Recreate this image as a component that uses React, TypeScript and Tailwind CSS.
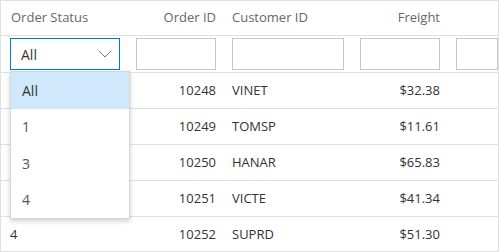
import React from 'react';
import { ChevronDown } from 'lucide-react';

type Order = { status: string; id: number; customer: string; freight: string };

const orders: Order[] = [
  { status: '1', id: 10248, customer: 'VINET', freight: '$32.38' },
  { status: '1', id: 10249, customer: 'TOMSP', freight: '$11.61' },
  { status: '3', id: 10250, customer: 'HANAR', freight: '$65.83' },
  { status: '4', id: 10251, customer: 'VICTE', freight: '$41.34' },
  { status: '4', id: 10252, customer: 'SUPRD', freight: '$51.30' },
];

const cols = 'grid grid-cols-[125px_96px_128px_96px_1fr]';

export default function App() {
  return (
    <div className="relative w-[499px] h-[252px] overflow-hidden bg-white border border-[#e0e0e0] text-[13px] font-['Open_Sans',sans-serif]">
      {/* header */}
      <div className={`${cols} h-[35px] border-b border-[#e0e0e0] text-[#666] items-center`}>
        <div className="pl-[10px]">Order Status</div>
        <div className="pr-[6px] text-right">Order ID</div>
        <div className="pl-[10px]">Customer ID</div>
        <div className="pr-[6px] text-right">Freight</div>
        <div />
      </div>

      {/* filter row */}
      <div className={`${cols} h-[37px] border-b border-[#e0e0e0] items-center`}>
        <div className="pl-[9px] pr-[6px]">
          <div className="h-[32px] border border-[#0078d6] flex items-center justify-between pl-[10px] pr-[2px] text-[14px] text-[#333]">
            <span>All</span>
            <ChevronDown size={24} strokeWidth={1} className="text-[#777]" />
          </div>
        </div>
        <div className="pl-[10px] pr-[6px]"><div className="h-[32px] border border-[#c8c8c8]" /></div>
        <div className="pl-[10px] pr-[6px]"><div className="h-[32px] border border-[#c8c8c8]" /></div>
        <div className="pl-[10px] pr-[6px]"><div className="h-[32px] border border-[#c8c8c8]" /></div>
        <div className="pl-[10px]"><div className="h-[32px] border border-[#c8c8c8]" /></div>
      </div>

      {/* rows */}
      {orders.map((o) => (
        <div key={o.id} className={`${cols} h-[36px] border-b border-[#e0e0e0] items-center text-[#333]`}>
          <div className="pl-[9px]">{o.status}</div>
          <div className="pr-[6px] text-right">{o.id}</div>
          <div className="pl-[10px]">{o.customer}</div>
          <div className="pr-[6px] text-right">{o.freight}</div>
          <div />
        </div>
      ))}

      {/* status dropdown popup */}
      <div className="absolute left-[9px] top-[70px] w-[120px] bg-white border border-[#d6d6d6] shadow-[0_2px_5px_rgba(0,0,0,0.2)] text-[14px] text-[#555]">
        {['All', '1', '3', '4'].map((item, i) => (
          <div
            key={item}
            className={`h-[36.5px] flex items-center pl-[11px] ${i === 0 ? 'bg-[#cfe8fc] text-[#333]' : ''}`}
          >
            {item}
          </div>
        ))}
      </div>
    </div>
  );
}
